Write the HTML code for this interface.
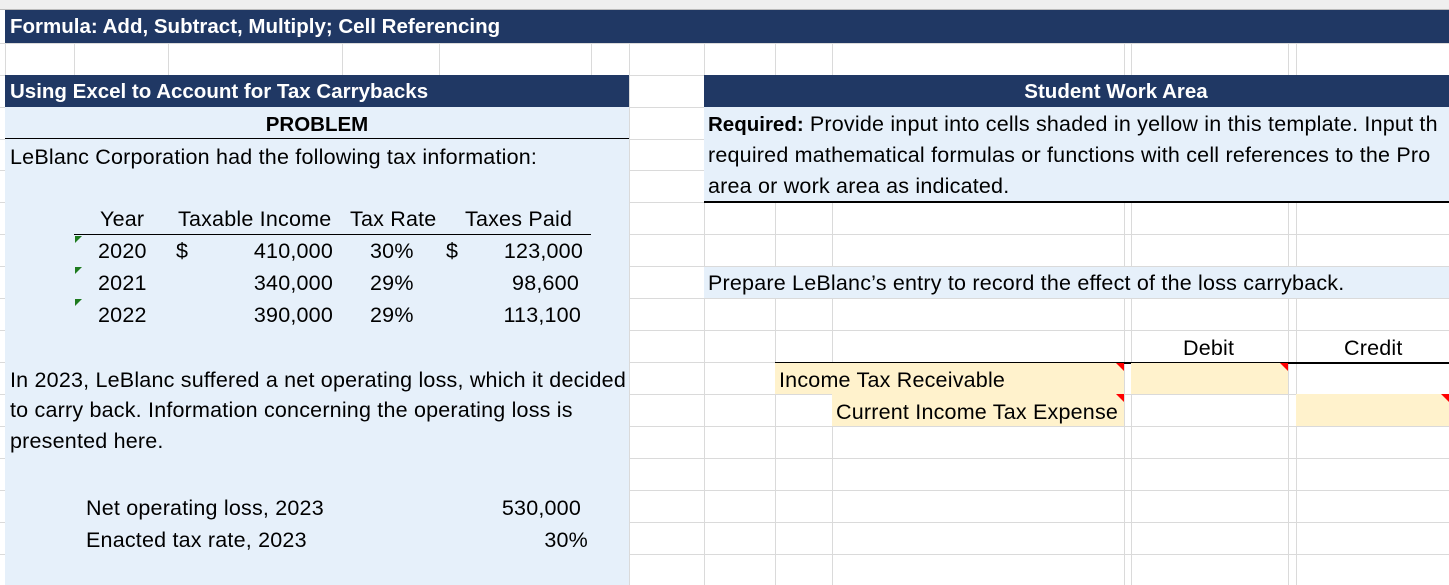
<!DOCTYPE html>
<html><head><meta charset="utf-8"><style>
*{margin:0;padding:0;box-sizing:border-box}
body{width:1449px;height:585px;overflow:hidden;background:#fff;position:relative;font-family:"Liberation Sans",sans-serif;font-size:21.5px;color:#000;letter-spacing:0.2px}
.a{position:absolute}
.t{position:absolute;line-height:22px;white-space:nowrap}
.r{text-align:right}
.b{font-weight:bold;font-size:20.5px;letter-spacing:0}
.w{color:#fff}
.vl{position:absolute;top:10px;width:1px;height:575px;background:#dadada}
.hl{position:absolute;left:0;width:1449px;height:1px;background:#dadada}
.g{position:absolute;width:0;height:0;border-top:7px solid #1e7b1e;border-right:7px solid transparent}
.rd{position:absolute;width:0;height:0;border-top:8px solid #f00;border-left:8px solid transparent}
</style></head><body>
<div class="a" style="left:0;top:0;width:1449px;height:10px;background:#efefef;border-bottom:1px solid #bbb"></div>
<div class="vl" style="left:5px"></div><div class="vl" style="left:74px"></div><div class="vl" style="left:168px"></div><div class="vl" style="left:342px"></div><div class="vl" style="left:439px"></div><div class="vl" style="left:591px"></div><div class="vl" style="left:629px"></div><div class="vl" style="left:704px"></div><div class="vl" style="left:775px"></div><div class="vl" style="left:832px"></div><div class="vl" style="left:1124px"></div><div class="vl" style="left:1131px"></div><div class="vl" style="left:1288px"></div><div class="vl" style="left:1296px"></div>
<div class="hl" style="top:43px"></div><div class="hl" style="top:75px"></div><div class="hl" style="top:107px"></div><div class="hl" style="top:139px"></div><div class="hl" style="top:170px"></div><div class="hl" style="top:202px"></div><div class="hl" style="top:234px"></div><div class="hl" style="top:266px"></div><div class="hl" style="top:298px"></div><div class="hl" style="top:330px"></div><div class="hl" style="top:362px"></div><div class="hl" style="top:394px"></div><div class="hl" style="top:426px"></div><div class="hl" style="top:458px"></div><div class="hl" style="top:490px"></div><div class="hl" style="top:522px"></div><div class="hl" style="top:554px"></div>

<div class="a" style="left:5px;top:10px;width:1444px;height:33px;background:#203864"></div>
<div class="t b w" style="left:10px;top:16px">Formula: Add, Subtract, Multiply; Cell Referencing</div>

<div class="a" style="left:5px;top:75px;width:624px;height:32px;background:#203864"></div>
<div class="t b w" style="left:10px;top:81px">Using Excel to Account for Tax Carrybacks</div>
<div class="a" style="left:5px;top:107px;width:624px;height:478px;background:#e6f0fa"></div>
<div class="a" style="left:5px;top:138px;width:624px;height:1px;background:#000"></div>
<div class="t b" style="left:5px;width:624px;text-align:center;top:114px">PROBLEM</div>
<div class="t" style="left:10px;top:146px">LeBlanc Corporation had the following tax information:</div>
<div class="t" style="left:100px;top:208px">Year</div>
<div class="t" style="left:178px;top:208px">Taxable Income</div>
<div class="t" style="left:350px;top:208px">Tax Rate</div>
<div class="t" style="left:465px;top:208px">Taxes Paid</div>
<div class="a" style="left:74px;top:234px;width:517px;height:1px;background:#000"></div>
<div class="g" style="left:75px;top:236px"></div><div class="g" style="left:75px;top:267px"></div><div class="g" style="left:75px;top:299px"></div>
<div class="t" style="left:98px;top:240px">2020</div><div class="t" style="left:176px;top:240px">$</div><div class="t r" style="left:200px;width:133px;top:240px">410,000</div><div class="t" style="left:370px;top:240px">30%</div><div class="t" style="left:446px;top:240px">$</div><div class="t r" style="left:450px;width:133px;top:240px">123,000</div>
<div class="t" style="left:98px;top:272px">2021</div><div class="t r" style="left:200px;width:133px;top:272px">340,000</div><div class="t" style="left:370px;top:272px">29%</div><div class="t r" style="left:450px;width:129px;top:272px">98,600</div>
<div class="t" style="left:98px;top:304px">2022</div><div class="t r" style="left:200px;width:133px;top:304px">390,000</div><div class="t" style="left:370px;top:304px">29%</div><div class="t r" style="left:450px;width:131px;top:304px">113,100</div>
<div class="t" style="left:10px;top:369px">In 2023, LeBlanc suffered a net operating loss, which it decided</div>
<div class="t" style="left:10px;top:399px">to carry back. Information concerning the operating loss is</div>
<div class="t" style="left:10px;top:430px">presented here.</div>
<div class="t" style="left:86px;top:497px">Net operating loss, 2023</div><div class="t r" style="left:450px;width:131px;top:497px">530,000</div>
<div class="t" style="left:86px;top:529px">Enacted tax rate, 2023</div><div class="t r" style="left:450px;width:138px;top:529px">30%</div>

<div class="a" style="left:704px;top:75px;width:745px;height:32px;background:#203864"></div>
<div class="t b w" style="left:704px;width:824px;text-align:center;top:81px">Student Work Area</div>
<div class="a" style="left:704px;top:107px;width:745px;height:95px;background:#e6f0fa"></div>
<div class="a" style="left:704px;top:201px;width:745px;height:1.5px;background:#000"></div>
<div class="t" style="left:708px;top:113px"><b style="font-size:20.5px;letter-spacing:0">Required:</b> Provide input into cells shaded in yellow in this template. Input th</div>
<div class="t" style="left:708px;top:144px">required mathematical formulas or functions with cell references to the Pro</div>
<div class="t" style="left:708px;top:175px">area or work area as indicated.</div>
<div class="a" style="left:704px;top:267px;width:745px;height:31px;background:#e6f0fa"></div>
<div class="t" style="left:708px;top:272px">Prepare LeBlanc’s entry to record the effect of the loss carryback.</div>
<div class="t" style="left:1183px;top:337px">Debit</div>
<div class="t" style="left:1344px;top:337px">Credit</div>
<div class="a" style="left:775px;top:362px;width:674px;height:1.5px;background:#000"></div>
<div class="a" style="left:775px;top:363px;width:349px;height:31px;background:#fff2cc"></div>
<div class="a" style="left:1131px;top:363px;width:157px;height:31px;background:#fff2cc"></div>
<div class="a" style="left:832px;top:394px;width:292px;height:32px;background:#fff2cc"></div>
<div class="a" style="left:1296px;top:394px;width:153px;height:32px;background:#fff2cc"></div>
<div class="rd" style="left:1116px;top:363px"></div><div class="rd" style="left:1280px;top:363px"></div><div class="rd" style="left:1116px;top:394px"></div><div class="rd" style="left:1441px;top:394px"></div>
<div class="t" style="left:779px;top:369px">Income Tax Receivable</div>
<div class="t" style="left:836px;top:401px">Current Income Tax Expense</div>
</body></html>
